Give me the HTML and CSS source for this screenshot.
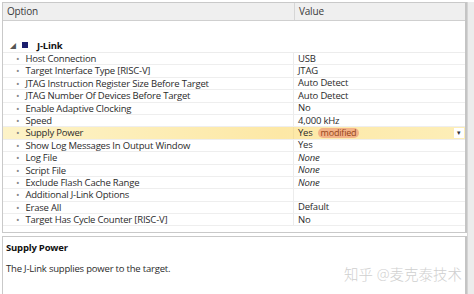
FILE: index.html
```html
<!DOCTYPE html>
<html>
<head>
<meta charset="utf-8">
<title>J-Link Options</title>
<link rel="stylesheet" href="styles.css">
</head>
<body>
<div class="frame">
  <div class="main">
    <div class="grid">
      <div class="head">
        <div class="col-opt">Option</div>
        <div class="col-val">Value</div>
      </div>
      <div class="spacer"></div>
      <div class="group">
        <span class="twisty">&#9698;</span>
        <span class="gicon"></span>
        <span class="gname">J-Link</span>
      </div>
      <div class="row"><div class="col-opt"><span class="dot">&bull;</span>Host Connection</div><div class="col-val">USB</div></div>
      <div class="row"><div class="col-opt"><span class="dot">&bull;</span>Target Interface Type [RISC-V]</div><div class="col-val">JTAG</div></div>
      <div class="row"><div class="col-opt"><span class="dot">&bull;</span>JTAG Instruction Register Size Before Target</div><div class="col-val">Auto Detect</div></div>
      <div class="row"><div class="col-opt"><span class="dot">&bull;</span>JTAG Number Of Devices Before Target</div><div class="col-val">Auto Detect</div></div>
      <div class="row"><div class="col-opt"><span class="dot">&bull;</span>Enable Adaptive Clocking</div><div class="col-val">No</div></div>
      <div class="row"><div class="col-opt"><span class="dot">&bull;</span>Speed</div><div class="col-val">4,000 kHz</div></div>
      <div class="row selected"><div class="col-opt"><span class="dot">&bull;</span>Supply Power</div><div class="col-val">Yes <span class="badge">modified</span><span class="drop">&#9662;</span></div></div>
      <div class="row"><div class="col-opt"><span class="dot">&bull;</span>Show Log Messages In Output Window</div><div class="col-val">Yes</div></div>
      <div class="row"><div class="col-opt"><span class="dot">&bull;</span>Log File</div><div class="col-val none">None</div></div>
      <div class="row"><div class="col-opt"><span class="dot">&bull;</span>Script File</div><div class="col-val none">None</div></div>
      <div class="row"><div class="col-opt"><span class="dot">&bull;</span>Exclude Flash Cache Range</div><div class="col-val none">None</div></div>
      <div class="row"><div class="col-opt"><span class="dot">&bull;</span>Additional J-Link Options</div><div class="col-val"></div></div>
      <div class="row"><div class="col-opt"><span class="dot">&bull;</span>Erase All</div><div class="col-val">Default</div></div>
      <div class="row"><div class="col-opt"><span class="dot">&bull;</span>Target Has Cycle Counter [RISC-V]</div><div class="col-val">No</div></div>
    </div>
    <div class="desc">
      <div class="desc-title">Supply Power</div>
      <div class="desc-text">The J-Link supplies power to the target.</div>
      <div class="mark">知乎 @麦克泰技术</div>
    </div>
  </div>
  <div class="scroll"></div>
</div>
</body>
</html>
```

FILE: styles.css
```css
body {
    margin: 0;
    background: #fff;
    font-family: "Open Sans", "Noto Sans CJK SC", sans-serif;
    font-size: 9.5px;
    letter-spacing: -0.2px;
    color: #2b2b2b;
}
.frame {
    display: flex;
    height: 294px;
    padding-left: 2px;
    padding-top: 2px;
    box-sizing: border-box;
}
.main {
    width: 465px;
    display: flex;
    flex-direction: column;
}
.scroll {
    flex: 1;
    background: #ececec;
    border-left: 1px solid #d4d4d4;
}
.grid {
    height: 231px;
    border: 1px solid #c9c9c9;
    border-right: 2px solid #c4c4c4;
    box-sizing: border-box;
}
.head {
    display: flex;
    height: 17px;
    background: #efefef;
    border-bottom: 1px solid #cfcfcf;
    font-size: 10px;
    color: #3a3a3a;
}
.head .col-opt {
    width: 287px;
    padding-left: 4px;
    border-right: 1px solid #d6d6d6;
    line-height: 17px;
}
.head .col-val {
    padding-left: 4px;
    line-height: 17px;
}
.spacer {
    height: 17px;
}
.group {
    display: flex;
    align-items: center;
    height: 14px;
    border-bottom: 1px solid #ececec;
    padding-left: 7px;
}
.twisty {
    font-size: 6px;
    color: #555;
    width: 10px;
}
.gicon {
    width: 6px;
    height: 6px;
    background: #1c1f6e;
    margin-left: 2px;
    margin-right: 9px;
}
.gname {
    font-weight: bold;
    color: #111;
}
.row {
    display: flex;
    height: 12.4px;
    line-height: 12px;
    border-bottom: 1px solid #eeeeee;
    box-sizing: border-box;
}
.row .col-opt {
    width: 291px;
    padding-left: 13px;
    border-right: 1px solid #ececec;
    box-sizing: border-box;
    white-space: nowrap;
}
.row .col-val {
    flex: 1;
    padding-left: 4px;
    display: flex;
    align-items: center;
}
.dot {
    color: #888;
    margin-right: 6px;
}
.none {
    font-style: italic;
}
.selected {
    background: linear-gradient(to right, #fdf3c8, #fde8a6 60%, #fdeeb8);
}
.selected .col-opt {
    border-right-color: #f3dfa0;
}
.badge {
    margin-left: 5px;
    padding: 0 3px;
    height: 10px;
    line-height: 10px;
    border-radius: 5px;
    background: #f3b287;
    color: #934517;
    font-size: 9px;
}
.drop {
    margin-left: auto;
    width: 10px;
    height: 10px;
    background: #fff;
    text-align: center;
    font-size: 7px;
    line-height: 10px;
    color: #333;
    margin-right: 1px;
}
.desc {
    flex: 1;
    margin-top: 3px;
    border: 1px solid #c9c9c9;
    border-right: 2px solid #c4c4c4;
    border-bottom: none;
    position: relative;
    padding-left: 3px;
}
.desc-title {
    font-weight: bold;
    margin-top: 4px;
    color: #111;
}
.desc-text {
    margin-top: 8px;
}
.mark {
    position: absolute;
    right: 3px;
    top: 26px;
    font-size: 14.5px;
    letter-spacing: 0;
    font-weight: 300;
    color: #cfcfcf;
}
```
